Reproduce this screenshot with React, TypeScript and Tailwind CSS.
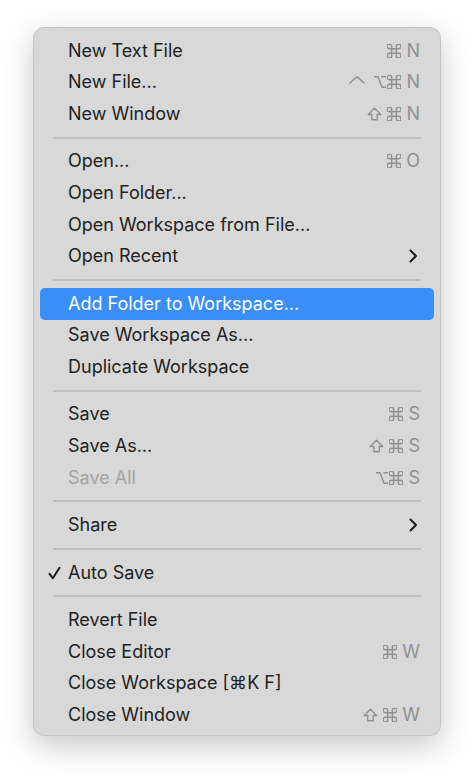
import React from 'react';

type Item = {
  label: string;
  keys?: string[];
  disabled?: boolean;
  active?: boolean;
  checked?: boolean;
  submenu?: boolean;
};

const GROUPS: Item[][] = [
  [
    { label: 'New Text File', keys: ['cmd', 'N'] },
    { label: 'New File...', keys: ['ctrl', 'opt', 'cmd', 'N'] },
    { label: 'New Window', keys: ['shift', 'cmd', 'N'] },
  ],
  [
    { label: 'Open...', keys: ['cmd', 'O'] },
    { label: 'Open Folder...' },
    { label: 'Open Workspace from File...' },
    { label: 'Open Recent', submenu: true },
  ],
  [
    { label: 'Add Folder to Workspace...', active: true },
    { label: 'Save Workspace As...' },
    { label: 'Duplicate Workspace' },
  ],
  [
    { label: 'Save', keys: ['cmd', 'S'] },
    { label: 'Save As...', keys: ['shift', 'cmd', 'S'] },
    { label: 'Save All', keys: ['opt', 'cmd', 'S'], disabled: true },
  ],
  [{ label: 'Share', submenu: true }],
  [{ label: 'Auto Save', checked: true }],
  [
    { label: 'Revert File' },
    { label: 'Close Editor', keys: ['cmd', 'W'] },
    { label: 'Close Workspace [⌘K F]' },
    { label: 'Close Window', keys: ['shift', 'cmd', 'W'] },
  ],
];

const KeyIcon = ({ name, color }: { name: string; color: string }) => {
  if (name === 'cmd')
    return (
      <svg width="14" height="14" viewBox="3 3 18 18" fill="none" className="mr-[5px]">
        <path
          d="M15 6v12a3 3 0 1 0 3-3H6a3 3 0 1 0 3 3V6a3 3 0 1 0-3 3h12a3 3 0 1 0-3-3"
          stroke={color}
          strokeWidth="1.9"
          strokeLinecap="round"
          strokeLinejoin="round"
        />
      </svg>
    );
  if (name === 'opt')
    return (
      <svg width="12" height="12" viewBox="3 3 18 18" fill="none" className="mr-[1px]">
        <path d="M3 4h6l6 16h6M14 4h7" stroke={color} strokeWidth="2.2" strokeLinejoin="round" />
      </svg>
    );
  if (name === 'shift')
    return (
      <svg width="15" height="14" viewBox="0 0 15 14" fill="none" className="mr-[5px]">
        <path d="M7.5 1.2 L13.8 7.5 H10.2 V12.8 H4.8 V7.5 H1.2 Z" stroke={color} strokeWidth="1.4" strokeLinejoin="round" />
      </svg>
    );
  return (
    <svg width="16" height="9" viewBox="0 0 16 9" fill="none" className="mr-[9px] mb-[5px]">
      <path d="M1 8 L8 1.5 L15 8" stroke={color} strokeWidth="1.6" strokeLinecap="round" strokeLinejoin="round" />
    </svg>
  );
};

const Chevron = () => (
  <svg width="10" height="14" viewBox="0 0 10 14" fill="none">
    <path d="M2.5 1.5 L8 7 L2.5 12.5" stroke="#1c1c1c" strokeWidth="2" strokeLinecap="round" strokeLinejoin="round" />
  </svg>
);

const Check = () => (
  <svg width="13" height="14" viewBox="0 0 13 14" fill="none">
    <path d="M1.5 7.8 L4.8 12.2 L11.5 1.8" stroke="#1c1c1c" strokeWidth="2" strokeLinecap="round" strokeLinejoin="round" />
  </svg>
);

const Row = ({ item }: { item: Item }) => {
  const text = item.active ? 'text-white' : item.disabled ? 'text-[#a3a3a3]' : 'text-[#222222]';
  const keyColor = item.active ? '#ffffff' : '#909090';
  return (
    <div
      className={`relative flex items-center h-[31.6px] pl-[28px] pr-[14px] rounded-[5px] ${item.active ? 'bg-[#3a8ef5]' : ''}`}
    >
      {item.checked && (
        <span className="absolute left-[8px] top-[9px]">
          <Check />
        </span>
      )}
      <span className={`flex-1 text-[18px] leading-none ${text}`}>{item.label}</span>
      {item.keys && (
        <span className="flex items-center">
          {item.keys.slice(0, -1).map((k, i) => (
            <KeyIcon key={i} name={k} color={keyColor} />
          ))}
          <span className="text-[18px] leading-none" style={{ color: keyColor }}>
            {item.keys[item.keys.length - 1]}
          </span>
        </span>
      )}
      {item.submenu && (
        <span className="mr-[2px] flex items-center">
          <Chevron />
        </span>
      )}
    </div>
  );
};

export default function App() {
  return (
    <div className="w-[474px] h-[775px] bg-white pt-[27px] pl-[33px]" style={{ fontFamily: 'Inter, "Noto Sans", sans-serif' }}>
      <div className="w-[408px] h-[709px] bg-[#d8d8d8] rounded-[11px] border border-[#c4c4c4] shadow-[0_10px_30px_rgba(0,0,0,0.22)] px-[6px] pt-[7px] pb-[5px]">
        {GROUPS.map((group, gi) => (
          <div key={gi}>
            {gi > 0 && (
              <div className="h-[15.9px] flex items-center px-[13px]">
                <div className="h-[2px] w-full bg-[#c0c0c0]" />
              </div>
            )}
            {group.map((item) => (
              <Row key={item.label} item={item} />
            ))}
          </div>
        ))}
      </div>
    </div>
  );
}
